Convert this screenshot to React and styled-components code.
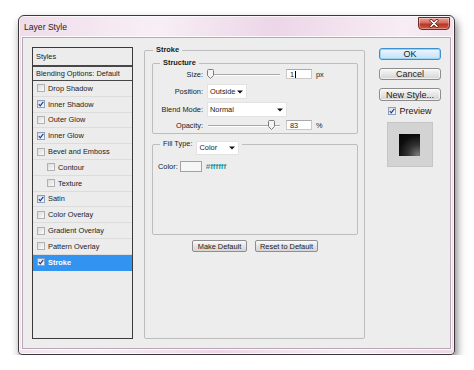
import React from 'react';
import styled, { createGlobalStyle } from 'styled-components';

const GlobalStyle = createGlobalStyle`
  html, body { margin: 0; padding: 0; background: #fff; }
  body { font-family: "Liberation Sans", Arial, sans-serif; color: #1a1a1a; }
  * { box-sizing: border-box; }
`;

const Window = styled.div`
  margin: 15px 0 0 18px;
  width: 437px;
  height: 340px;
  display: flex;
  flex-direction: column;
  border: 1px solid #3d383c;
  border-radius: 6px 6px 4px 4px;
  background: linear-gradient(100deg, #efdcea 0%, #f8eff6 28%, #ecd6e8 52%, #f8edf4 78%, #ecd8e7 100%);
  box-shadow: 2px 5px 8px rgba(0, 0, 0, 0.5), inset 0 0 0 1px rgba(255, 255, 255, 0.7);
`;

const TitleBar = styled.div`
  height: 21px;
  display: flex;
  align-items: center;
  justify-content: space-between;
  padding-left: 5px;
`;

const Title = styled.span`
  font-size: 8.6px;
  color: #1c1c1c;
`;

const CloseButton = styled.div`
  align-self: flex-start;
  margin: 1px 4px 0 0;
  width: 32px;
  height: 13px;
  display: flex;
  align-items: center;
  justify-content: center;
  border: 1px solid #6e2a26;
  border-radius: 0 0 4px 4px;
  background: linear-gradient(#e8a195 0%, #d36a5c 45%, #bb3322 55%, #cf5a40 100%);
  box-shadow: inset 0 0 0 1px rgba(255, 255, 255, 0.35);
`;

const Client = styled.div`
  flex: 1;
  margin: 0 3px 5px 3px;
  display: flex;
  padding: 9px;
  background: #ededed;
  border: 1px solid #b7a8b4;
  box-shadow: 0 0 0 1px rgba(255, 255, 255, 0.8);
`;

/* ---------- left list ---------- */

const ListPanel = styled.div`
  width: 101px;
  display: flex;
  flex-direction: column;
  border: 1px solid #3a3a3a;
  background: #ececec;
  font-size: 7.4px;
`;

const ListHeader = styled.div`
  height: ${(p) => p.$h}px;
  display: flex;
  align-items: center;
  padding-left: 3px;
  border-bottom: ${(p) => p.$bw}px solid #474747;
`;

const ListItem = styled.div`
  height: 15.8px;
  display: flex;
  align-items: center;
  gap: 3px;
  padding-left: ${(p) => (p.$indent ? 14 : 4)}px;
  border-bottom: 1px solid ${(p) => (p.$selected ? '#3393f0' : '#dcdcdc')};
  background: ${(p) => (p.$selected ? '#3393f0' : 'transparent')};
  color: ${(p) => (p.$selected ? '#fff' : '#222')};
  font-weight: ${(p) => (p.$selected ? 700 : 400)};
`;

const Box = styled.span`
  width: ${(p) => p.$size}px;
  height: ${(p) => p.$size}px;
  flex: none;
  display: flex;
  align-items: center;
  justify-content: center;
  border: 1px solid ${(p) => (p.$on ? '#8aa0bc' : '#b0b0b0')};
  background: linear-gradient(135deg, #dcdcdc, #fafafa);
`;

const Check = ({ on, size = 8 }) => (
  <Box $size={size} $on={on}>
    {on && (
      <svg width={size - 2} height={size - 2} viewBox="0 0 6 6">
        <path d="M0.8 3.1 L2.3 4.8 L5.3 0.9" fill="none" stroke="#1d3f96" strokeWidth="1.2" />
      </svg>
    )}
  </Box>
);

/* ---------- middle ---------- */

const Main = styled.div`
  width: 221px;
  margin: 0 14px 0 11px;
  display: flex;
  flex-direction: column;
  font-size: 7.4px;
`;

const Group = styled.fieldset`
  margin: ${(p) => p.$mt || 0}px 0 0 0;
  padding: 0 6px ${(p) => p.$pb || 0}px ${(p) => p.$pl || 7}px;
  border: 1px solid #bdbdbd;
  border-radius: 2px;
  min-width: 0;
  flex: ${(p) => (p.$grow ? 1 : 'none')};
  display: flex;
  flex-direction: column;
`;

const Legend = styled.legend`
  padding: 0 3px;
  margin-left: ${(p) => p.$ml || 0}px;
  height: 8px;
  line-height: 8px;
  font-weight: ${(p) => (p.$bold ? 700 : 400)};
  display: flex;
  align-items: flex-start;
  gap: 4px;
`;

const Row = styled.div`
  height: ${(p) => p.$h}px;
  margin-top: ${(p) => p.$mt}px;
  display: flex;
  align-items: center;
`;

const Label = styled.span`
  width: ${(p) => p.$w || 43}px;
  margin-right: 4px;
  text-align: right;
  flex: none;
`;

const SliderTrack = styled.div`
  position: relative;
  width: 73px;
  height: 10px;
  flex: none;
  &::before {
    content: '';
    position: absolute;
    left: 1px;
    right: 0;
    top: 5px;
    height: 1px;
    background: #a8a8a8;
    box-shadow: 0 1px 0 #fff;
  }
`;

const Thumb = styled.svg`
  position: absolute;
  top: 0;
  margin-left: -3px;
`;

const Slider = ({ value }) => (
  <SliderTrack>
    <Thumb width="7" height="10" viewBox="0 0 7 10" style={{ left: `${value * 0.73 + 3}px` }}>
      <path d="M1.5 0.5 H5.5 Q6.5 0.5 6.5 1.5 V6.5 L3.5 9.5 L0.5 6.5 V1.5 Q0.5 0.5 1.5 0.5 Z" fill="#f4f4f4" stroke="#7d7d7d" />
    </Thumb>
  </SliderTrack>
);

const Field = styled.div`
  width: 26px;
  height: 10px;
  margin-left: 6px;
  display: flex;
  align-items: center;
  padding-left: 3px;
  background: #fff;
  border: 1px solid #c9c9c9;
  border-top-color: #a9a9a9;
`;

const Caret = styled.span`
  width: 1px;
  height: 7px;
  background: #000;
  margin-left: 1px;
`;

const Unit = styled.span`
  margin-left: 4px;
`;

const Select = styled.div`
  width: ${(p) => p.$w}px;
  height: ${(p) => p.$h || 15}px;
  flex: none;
  display: flex;
  align-items: center;
  justify-content: space-between;
  padding: 0 3px 0 2px;
  background: #fff;
  border: 1px solid #e2e2e2;
  margin-top: ${(p) => p.$mt || 0}px;
`;

const Arrow = () => (
  <svg width="6" height="4" viewBox="0 0 6 4">
    <path d="M0 0.5 H6 L3 3.5 Z" fill="#111" />
  </svg>
);

const Swatch = styled.span`
  width: 22px;
  height: 11px;
  margin-left: 2px;
  background: #f6f6f6;
  border: 1px solid #a2a2a2;
`;

const HexText = styled.span`
  margin-left: 4px;
  font-size: 8px;
  font-weight: 700;
  color: #1d9aa3;
`;

const ButtonRow = styled.div`
  margin-top: 5px;
  display: flex;
  justify-content: center;
  gap: 8px;
`;

const SmallButton = styled.div`
  width: ${(p) => p.$w}px;
  height: 12px;
  display: flex;
  align-items: center;
  justify-content: center;
  border: 1px solid #8e8e8e;
  border-radius: 2px;
  background: linear-gradient(#fafafa, #e2e2e2 55%, #d6d6d6);
`;

/* ---------- right column ---------- */

const Side = styled.div`
  width: 62px;
  display: flex;
  flex-direction: column;
  font-size: 9px;
`;

const Button = styled.div`
  height: ${(p) => p.$h || 12}px;
  margin-top: ${(p) => p.$mt}px;
  display: flex;
  align-items: center;
  justify-content: center;
  border: 1px solid ${(p) => (p.$primary ? '#3c8fd0' : '#8c8c8c')};
  border-radius: 3px;
  background: ${(p) =>
    p.$primary
      ? 'linear-gradient(#eef7fd, #d7ecfa 50%, #c2e1f6)'
      : 'linear-gradient(#f8f8f8, #e6e6e6 50%, #d4d4d4)'};
  box-shadow: ${(p) => (p.$primary ? 'inset 0 0 0 1px #9ed2f4' : 'inset 0 0 0 1px rgba(255,255,255,0.6)')};
`;

const PreviewRow = styled.div`
  height: 10px;
  margin-top: 5px;
  display: flex;
  align-items: center;
  justify-content: center;
  gap: 3px;
`;

const PreviewBox = styled.div`
  align-self: center;
  width: 46px;
  height: 45px;
  margin-top: 6px;
  display: flex;
  align-items: center;
  justify-content: center;
  background: #d3d3d3;
  border: 1px solid #c6c6c6;
`;

const PreviewSwatch = styled.div`
  width: 21px;
  height: 22px;
  margin-left: -1px;
  background: radial-gradient(circle at 90% 95%, #7a7a7a 0%, #333 35%, #0d0d0d 70%, #050505 100%);
`;

const styles = [
  { name: 'Drop Shadow' },
  { name: 'Inner Shadow', on: true },
  { name: 'Outer Glow' },
  { name: 'Inner Glow', on: true },
  { name: 'Bevel and Emboss' },
  { name: 'Contour', indent: true },
  { name: 'Texture', indent: true },
  { name: 'Satin', on: true },
  { name: 'Color Overlay' },
  { name: 'Gradient Overlay' },
  { name: 'Pattern Overlay' },
  { name: 'Stroke', on: true, selected: true },
];

export default function App() {
  return (
    <>
      <GlobalStyle />
      <Window>
        <TitleBar>
          <Title>Layer Style</Title>
          <CloseButton>
            <svg width="10" height="9" viewBox="0 0 10 9">
              <path d="M2 1.5 L8 7.5 M8 1.5 L2 7.5" stroke="#5a1a14" strokeWidth="3" strokeLinecap="round" />
              <path d="M2 1.5 L8 7.5 M8 1.5 L2 7.5" stroke="#fff" strokeWidth="1.6" strokeLinecap="round" />
            </svg>
          </CloseButton>
        </TitleBar>
        <Client>
          <ListPanel>
            <ListHeader $h={19} $bw={2}>Styles</ListHeader>
            <ListHeader $h={14} $bw={1}>Blending Options: Default</ListHeader>
            {styles.map((s) => (
              <ListItem key={s.name} $indent={s.indent} $selected={s.selected}>
                <Check on={s.on} />
                {s.name}
              </ListItem>
            ))}
          </ListPanel>

          <Main>
            <Group $grow $mt={-1}>
              <Legend $bold $ml={1}>Stroke</Legend>
              <Group $mt={5} $pb={3}>
                <Legend $bold>Structure</Legend>
                <Row $h={10} $mt={2}>
                  <Label>Size:</Label>
                  <Slider value={0} />
                  <Field>
                    1<Caret />
                  </Field>
                  <Unit>px</Unit>
                </Row>
                <Row $h={15} $mt={5}>
                  <Label>Position:</Label>
                  <Select $w={40}>
                    Outside <Arrow />
                  </Select>
                </Row>
                <Row $h={15} $mt={3}>
                  <Label>Blend Mode:</Label>
                  <Select $w={80}>
                    Normal <Arrow />
                  </Select>
                </Row>
                <Row $h={10} $mt={3}>
                  <Label>Opacity:</Label>
                  <Slider value={83} />
                  <Field>83</Field>
                  <Unit>%</Unit>
                </Row>
              </Group>

              <Group $mt={6} $pb={62} $pl={5}>
                <Legend $ml={2}>
                  <span>Fill Type:</span>
                  <Select $w={43} $h={14} $mt={1}>
                    Color <Arrow />
                  </Select>
                </Legend>
                <Row $h={11} $mt={13}>
                  <span>Color:</span>
                  <Swatch />
                  <HexText>#ffffff</HexText>
                </Row>
              </Group>

              <ButtonRow>
                <SmallButton $w={55}>Make Default</SmallButton>
                <SmallButton $w={63}>Reset to Default</SmallButton>
              </ButtonRow>
            </Group>
          </Main>

          <Side>
            <Button $primary $mt={1}>OK</Button>
            <Button $mt={8}>Cancel</Button>
            <Button $mt={8} $h={13}>New Style...</Button>
            <PreviewRow>
              <Check on size={8} />
              Preview
            </PreviewRow>
            <PreviewBox>
              <PreviewSwatch />
            </PreviewBox>
          </Side>
        </Client>
      </Window>
    </>
  );
}
